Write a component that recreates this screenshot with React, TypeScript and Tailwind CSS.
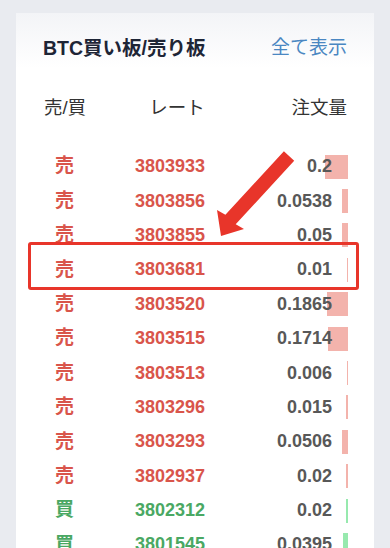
import React from "react";

type Row = { side: "売" | "買"; rate: string; qty: string };

const rows: Row[] = [
  { side: "売", rate: "3803933", qty: "0.2" },
  { side: "売", rate: "3803856", qty: "0.0538" },
  { side: "売", rate: "3803855", qty: "0.05" },
  { side: "売", rate: "3803681", qty: "0.01" },
  { side: "売", rate: "3803520", qty: "0.1865" },
  { side: "売", rate: "3803515", qty: "0.1714" },
  { side: "売", rate: "3803513", qty: "0.006" },
  { side: "売", rate: "3803296", qty: "0.015" },
  { side: "売", rate: "3803293", qty: "0.0506" },
  { side: "売", rate: "3802937", qty: "0.02" },
  { side: "買", rate: "3802312", qty: "0.02" },
  { side: "買", rate: "3801545", qty: "0.0395" },
];

export default function App() {
  return (
    <div className="relative w-[390px] h-[548px] overflow-hidden bg-[#e9ebf0] pt-[13px] px-[16px] font-['Liberation_Sans','Noto_Sans_CJK_JP',sans-serif]">
      <div className="h-full bg-[linear-gradient(to_bottom,#f3f4f7,#ffffff_55px)]">
        {/* Title */}
        <div className="flex items-center justify-between pt-[21px] pl-[27px] pr-[27px] h-[49px]">
          <div className="text-[19.5px] leading-[28px] font-bold text-[#1e2536]">BTC買い板/売り板</div>
          <div className="text-[19px] leading-[28px] text-[#4a87c2]">全て表示</div>
        </div>
        {/* Column header */}
        <div className="flex items-center mt-[32px] pl-[27px] pr-[27px] h-[28px] text-[18.5px] leading-[28px] text-[#333333]">
          <div className="w-[44px] text-center">売/買</div>
          <div className="ml-[46px] w-[88px] text-center">レート</div>
          <div className="flex-1 text-right">注文量</div>
        </div>
        {/* Rows */}
        <div className="mt-[27.5px]">
          {rows.map((r, i) => {
            const sell = r.side === "売";
            const w = Math.max(1, parseFloat(r.qty) * 115);
            return (
              <div key={i} className="flex items-center h-[34.4px] pl-[38px] pr-[26px]">
                <div className={`w-[21px] text-center text-[19px] font-bold ${sell ? "text-[#d9554b]" : "text-[#4aa863]"}`}>
                  {r.side}
                </div>
                <div className={`ml-[59px] w-[72px] text-center text-[18px] font-bold ${sell ? "text-[#d9554b]" : "text-[#4aa863]"}`}>
                  {r.rate}
                </div>
                <div className="relative flex-1 h-full flex items-center justify-end">
                  <div
                    className={`absolute right-0 top-[5.2px] h-[24px] ${sell ? "bg-[#f3b3ac]" : "bg-[#97e9ae]"}`}
                    style={{ width: `${w}px` }}
                  />
                  <span className="relative pr-[16px] text-[18px] font-bold text-[#585858]">{r.qty}</span>
                </div>
              </div>
            );
          })}
        </div>
      </div>

      {/* Highlight box */}
      <div className="absolute left-[28px] top-[242px] w-[331px] h-[48px] border-[3.5px] border-[#e8352a] rounded-[3px]" />

      {/* Arrow */}
      <svg className="absolute left-0 top-0" width="390" height="548" viewBox="0 0 390 548">
        <polygon
          points="283.9,151.3 294.2,160.8 235.7,224.3 244,229 221,236 217,210 225.4,214.8"
          fill="#e8352a"
        />
      </svg>
    </div>
  );
}
